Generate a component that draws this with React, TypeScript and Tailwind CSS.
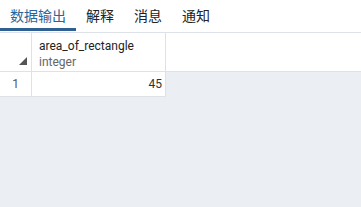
import React from "react";

export default function App() {
  const font = { fontFamily: "Roboto, 'Noto Sans CJK SC', sans-serif" };
  return (
    <div className="w-[361px] h-[207px] bg-[#ebeef3] flex flex-col overflow-hidden" style={font}>
      <div className="h-[33px] bg-white border-b border-[#dde1e8] flex items-stretch text-[14px] shrink-0">
        <div className="relative px-[10px] flex items-center text-[#2c6598]">
          数据输出
          <div className="absolute left-0 right-0 bottom-[1px] h-[3px] bg-[#2e6191]" />
        </div>
        <div className="px-[10px] flex items-center text-[#222]">解释</div>
        <div className="px-[10px] flex items-center text-[#222]">消息</div>
        <div className="px-[10px] flex items-center text-[#222]">通知</div>
      </div>
      <div className="flex h-[39px] bg-white border-b border-[#dde1e8] shrink-0">
        <div className="w-[32px] border-r border-[#dde1e8] relative">
          <svg className="absolute left-[19px] top-[24px]" width="8" height="8" viewBox="0 0 8 8">
            <polygon points="8,0 8,8 0,8" fill="#555" />
          </svg>
        </div>
        <div className="w-[134px] border-r border-[#dde1e8] pl-[7px] pt-[5px] flex flex-col leading-[16px] text-[12px]">
          <span className="text-[#222]">area_of_rectangle</span>
          <span className="text-[#666]">integer</span>
        </div>
      </div>
      <div className="flex h-[25px] shrink-0">
        <div className="w-[32px] bg-white border-r border-b border-[#dde1e8] flex items-center justify-center text-[12px] text-[#555]">1</div>
        <div className="w-[134px] bg-white border-r border-b border-[#dde1e8] flex items-center justify-end pr-[3px] text-[12px] text-[#333]">45</div>
      </div>
    </div>
  );
}
